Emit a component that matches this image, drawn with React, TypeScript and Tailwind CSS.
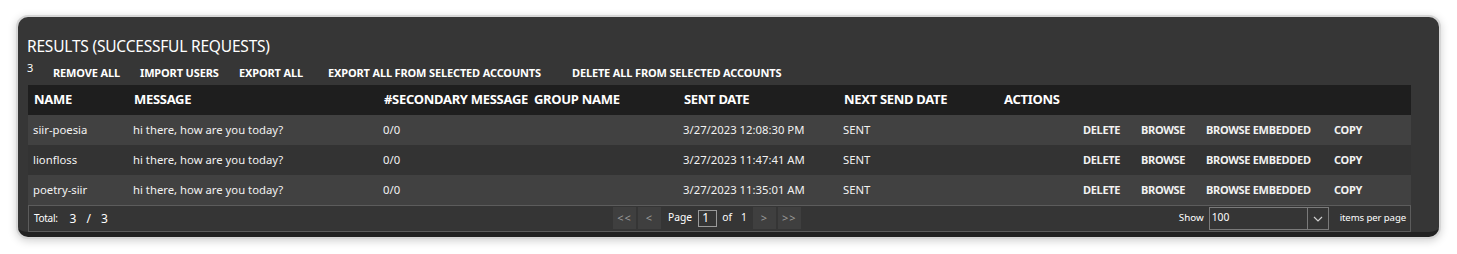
import React from 'react';

const font = { fontFamily: '"Noto Sans", "Open Sans", sans-serif' };

const rows = [
  { name: 'siir-poesia', message: 'hi there, how are you today?', secondary: '0/0', group: '', sent: '3/27/2023 12:08:30 PM', next: 'SENT' },
  { name: 'lionfloss', message: 'hi there, how are you today?', secondary: '0/0', group: '', sent: '3/27/2023 11:47:41 AM', next: 'SENT' },
  { name: 'poetry-siir', message: 'hi there, how are you today?', secondary: '0/0', group: '', sent: '3/27/2023 11:35:01 AM', next: 'SENT' },
];

const toolbar = [
  { label: 'REMOVE ALL', w: 'w-[87px]' },
  { label: 'IMPORT USERS', w: 'w-[99px]' },
  { label: 'EXPORT ALL', w: 'w-[89px]' },
  { label: 'EXPORT ALL FROM SELECTED ACCOUNTS', w: 'w-[244px]' },
  { label: 'DELETE ALL FROM SELECTED ACCOUNTS', w: 'w-[230px]' },
];

const PagerButton: React.FC<{ label: string; className?: string }> = ({ label, className = '' }) => (
  <div className={`w-[23px] h-[22px] flex items-center justify-center bg-[#3f3f3f] text-[#9a9a9a] text-[11px] tracking-[1px] ${className}`}>
    {label}
  </div>
);

export default function App() {
  return (
    <div className="w-[1457px] h-[254px] bg-white pt-[17px] pl-[18px]" style={font}>
      <div className="w-[1421px] h-[220px] bg-[#363636] rounded-[10px] border-b-[5px] border-[#222222] shadow-[0_0_0_2px_#d6d6d6,0_2px_8px_2px_rgba(0,0,0,0.18)] text-white flex flex-col">
        <div className="mt-[18px] h-[22px] pl-[9px] text-[15.5px] leading-[22px] tracking-[-0.2px]">
          RESULTS (SUCCESSFUL REQUESTS)
        </div>

        <div className="h-[28px] flex pl-[9px]">
          <div className="w-[26px] text-[11px] leading-[14px] pt-[4px]">3</div>
          {toolbar.map((t) => (
            <div key={t.label} className={`${t.w} text-[11px] font-bold leading-[14px] pt-[9px] tracking-[-0.15px] whitespace-nowrap`}>
              {t.label}
            </div>
          ))}
        </div>

        <div className="ml-[10px] w-[1383px] flex flex-col">
          <div className="h-[30px] bg-[#1e1e1e] flex items-center text-[13px] font-bold tracking-[-0.3px] whitespace-nowrap">
            <div className="w-[100px] pl-[6px]">NAME</div>
            <div className="w-[250px] pl-[6px]">MESSAGE</div>
            <div className="w-[150px] pl-[6px] overflow-hidden">#SECONDARY MESSAGES</div>
            <div className="w-[150px] pl-[6px]">GROUP NAME</div>
            <div className="w-[160px] pl-[6px]">SENT DATE</div>
            <div className="w-[160px] pl-[6px]">NEXT SEND DATE</div>
            <div className="flex-1 pl-[6px]">ACTIONS</div>
          </div>

          {rows.map((r, i) => (
            <div
              key={r.name}
              className={`h-[30px] flex items-center text-[11.3px] whitespace-nowrap text-[#f2f2f2] ${i % 2 === 0 ? 'bg-[#414141]' : 'bg-[#333333]'}`}
            >
              <div className="w-[100px] pl-[5px]">{r.name}</div>
              <div className="w-[250px] pl-[5px]">{r.message}</div>
              <div className="w-[150px] pl-[5px]">{r.secondary}</div>
              <div className="w-[150px] pl-[5px]">{r.group}</div>
              <div className="w-[160px] pl-[5px]">{r.sent}</div>
              <div className="w-[160px] pl-[5px]">{r.next}</div>
              <div className="flex-1 pl-[85px] flex text-[11px] font-bold tracking-[-0.3px]">
                <span className="w-[58px]">DELETE</span>
                <span className="w-[65px]">BROWSE</span>
                <span className="w-[128px]">BROWSE EMBEDDED</span>
                <span>COPY</span>
              </div>
            </div>
          ))}

          <div className="h-[27px] border border-[#5c5c5c] bg-[#353535] flex items-center relative">
            <div className="flex items-center pl-[5px] w-[300px]">
              <span className="text-[10px] tracking-[-0.3px]">Total:</span>
              <span className="ml-[12px] text-[12px] flex gap-[10px]">
                <span>3</span>
                <span>/</span>
                <span>3</span>
              </span>
            </div>
            <div className="absolute left-[584px] top-[1px] flex items-center">
              <PagerButton label="<<" />
              <PagerButton label="<" className="ml-[2px]" />
              <span className="ml-[7px] text-[10.3px]">Page</span>
              <div className="ml-[6px] w-[19px] h-[17px] border border-[#9a9a9a] text-[12px] leading-[14px] pl-[3px]">1</div>
              <span className="ml-[5px] text-[10.3px]">of</span>
              <span className="ml-[9px] text-[10.3px]">1</span>
              <PagerButton label=">" className="ml-[6px]" />
              <PagerButton label=">>" className="ml-[2px]" />
            </div>
            <div className="ml-auto flex items-center pr-[4px]">
              <span className="text-[9.8px] mr-[5px]">Show</span>
              <div className="w-[120px] h-[23px] border border-[#7a7a7a] flex">
                <div className="flex-1 text-[10.3px] pl-[2px] leading-[19px]">100</div>
                <div className="w-[21px] border-l border-[#7a7a7a] flex items-center justify-center">
                  <svg width="10" height="6" viewBox="0 0 10 6" fill="none" stroke="#cfcfcf" strokeWidth="1.2">
                    <path d="M1 1l4 4 4-4" />
                  </svg>
                </div>
              </div>
              <span className="ml-[11px] text-[9.6px] tracking-[-0.1px]">items per page</span>
            </div>
          </div>
        </div>
      </div>
    </div>
  );
}
